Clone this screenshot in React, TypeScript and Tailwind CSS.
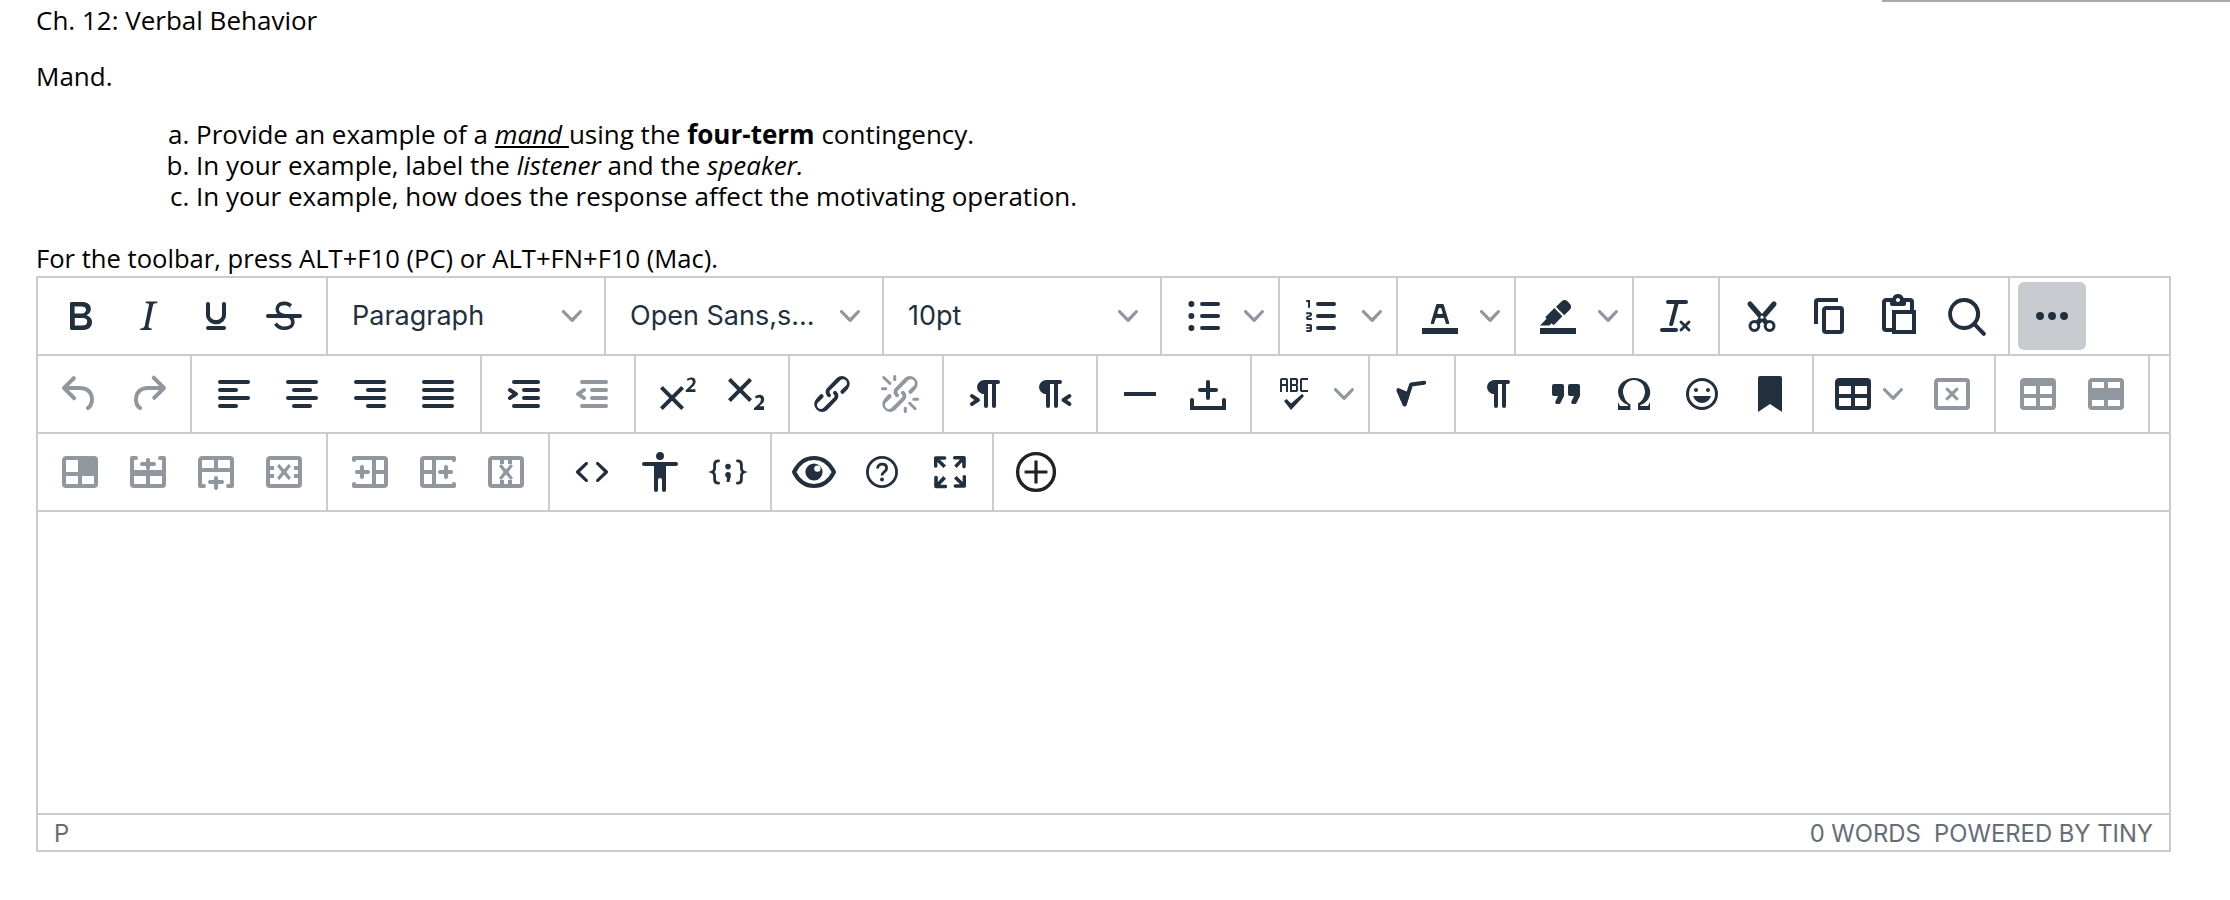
import type { ReactNode } from 'react'

// paths of the editor toolbar icons, all on a 24 unit grid
const BOX = 'M19 4a2 2 0 012 2v12a2 2 0 01-2 2H5a2 2 0 01-2-2V6c0-1.1.9-2 2-2h14z'
const X_MARK = 'M14.300 8l1.200 1-2.300 3 2.300 3-1.200 1-2.300-2.800L9.700 16l-1.200-1 2.300-3-2.300-3 1.200-1 2.300 2.800z'
const ROW_ABOVE =
  'M6 4a1 1 0 110 2H5v5h14V6h-1a1 1 0 010-2h2c.6 0 1 .4 1 1v13a2 2 0 01-2 2H5a2 2 0 01-2-2V5c0-.6.4-1 1-1h2zm5 10H5v4h6v-4zm8 0h-6v4h6v-4zM12 5c.5 0 1 .4 1 .8V7h2a1 1 0 010 2h-2v1.200c0 .4-.4.8-1 .8s-1-.4-1-.8V9H9a1 1 0 010-2h2V5.800c0-.4.5-.8 1-.8z'
const ROW_AFTER =
  'M12 14c.5 0 1 .4 1 1v1h2c.6 0 1 .4 1 1s-.4 1-1 1h-2v2c0 .6-.4 1-1 1a1 1 0 01-1-1v-2H9a1 1 0 010-2h2v-1c0-.6.4-1 1-1zm6 6a1 1 0 010-2h1v-6H5v6h1a1 1 0 010 2H4a1 1 0 01-1-1V6c0-1.1.9-2 2-2h14a2 2 0 012 2v13c0 .5-.4 1-1 1h-2zM11 6H5v4h6V6zm8 0h-6v4h6V6z'
const COL_BEFORE =
  'M4 4h15a2 2 0 012 2v12a2 2 0 01-2 2H4a1 1 0 01-1-1v-1a1 1 0 012 0h8V6H5a1 1 0 01-2 0V5c0-.6.4-1 1-1zM15 6h4v5h-4zM15 13h4v5h-4zM8 8.500c.5 0 1 .4 1 1V11h2a1 1 0 010 2H9v1.500a1 1 0 01-2 0V13H5.500a1 1 0 010-2H7V9.500c0-.6.5-1 1-1z'
const LINK =
  'M6.2 12.3a1 1 0 011.4 1.4l-2 2a2 2 0 102.6 2.8l4.8-4.8a1 1 0 000-1.4 1 1 0 111.4-1.3 2.9 2.9 0 010 4L9.6 20a3.9 3.9 0 01-5.5-5.5l2-2.2zm11.6-.6a1 1 0 01-1.4-1.4l2.1-2a2 2 0 10-2.7-2.8L11 10.3a1 1 0 000 1.4A1 1 0 119.6 13a2.9 2.9 0 010-4L14.4 4a3.9 3.9 0 015.5 5.5l-2.1 2.2z'

const paths: Record<string, ReactNode> = {
  bold: <path d="M7.8 19c-.3 0-.5 0-.6-.2l-.2-.5V5.7c0-.2 0-.4.2-.5l.6-.2h5c1.5 0 2.7.3 3.5 1 .7.6 1.1 1.4 1.1 2.5a3 3 0 01-.6 1.9c-.4.6-1 1-1.6 1.2.4.1.9.3 1.3.6s.8.7 1 1.2c.4.4.5 1 .5 1.6 0 1.3-.4 2.3-1.3 3-.8.7-2.1 1-3.8 1H7.8zm5-8.3c.6 0 1.2-.1 1.6-.5.4-.3.6-.7.6-1.3 0-1.1-.8-1.7-2.3-1.7H9.3v3.5h3.4zm.5 6c.7 0 1.3-.1 1.7-.4.4-.4.6-.9.6-1.5s-.2-1-.7-1.4c-.4-.3-1-.4-2-.4H9.4v3.8h4z" fillRule="evenodd" />,
  italic: <path d="M16.7 4.7l-.1.9h-.3c-.6 0-1 0-1.4.3-.3.3-.4.6-.5 1.1l-2.1 9.8v.6c0 .5.4.8 1.4.8h.2l-.2.8H8l.2-.8h.2c1.1 0 1.8-.5 2-1.5l2-9.8.1-.5c0-.6-.4-.8-1.4-.8h-.3l.2-.9h5.8z" fillRule="evenodd" />,
  underline: <path d="M16 5c.6 0 1 .4 1 1v5.5a4 4 0 01-.4 1.8l-1 1.4a5.3 5.3 0 01-5.5 1 5 5 0 01-1.6-1c-.5-.4-.8-.9-1.1-1.4a4 4 0 01-.4-1.8V6c0-.6.4-1 1-1s1 .4 1 1v5.5c0 .3 0 .6.2 1l.6.7a3.3 3.3 0 002.2.8 3.4 3.4 0 002.2-.8c.3-.2.4-.5.6-.8l.2-.9V6c0-.6.4-1 1-1zM8 17h8c.6 0 1 .4 1 1s-.4 1-1 1H8a1 1 0 010-2z" fillRule="evenodd" />,
  strike: (
    <>
      <path d="M15.6 8.5c-.5-.7-1-1.1-1.3-1.3-.6-.4-1.3-.6-2-.6-2.7 0-2.8 1.7-2.8 2.1 0 1.6 1.8 2 3.2 2.3 4.4.9 4.6 2.8 4.6 3.9 0 1.4-.7 4.1-5 4.1A6.2 6.2 0 017 16.4l1.5-1.1c.4.6 1.6 2 3.7 2 1.6 0 2.5-.4 3-1 .3-.4.3-.9.3-1.3 0-1.6-1.3-2.1-3.6-2.7-1.4-.3-4.1-1-4.1-3.6 0-1.5.6-4 4.4-4 1.9 0 3 .7 3.8 1.5l-1 1.3z" />
      <rect width="18" height="2" x="3" y="11" rx="1" />
    </>
  ),
  undo: <path d="M6.4 8H12c3.7 0 6.2 2 6.8 5.1.6 2.7-.4 5.6-2.3 6.8a1 1 0 01-1-1.8c1.1-.6 1.8-2.7 1.4-4.6-.5-2.1-2.1-3.5-4.9-3.5H6.4l3.3 3.3a1 1 0 11-1.4 1.4l-5-5a1 1 0 010-1.4l5-5a1 1 0 011.4 1.4L6.4 8z" />,
  redo: <path d="M17.6 10H12c-2.8 0-4.4 1.4-4.9 3.5-.4 2 .3 4 1.4 4.6a1 1 0 11-1 1.8c-2-1.2-2.9-4.1-2.3-6.8.6-3 3-5.1 6.8-5.1h5.6l-3.3-3.3a1 1 0 111.4-1.4l5 5a1 1 0 010 1.4l-5 5a1 1 0 01-1.4-1.4l3.3-3.3z" />,
  alignLeft: <path d="M5 5h14c.6 0 1 .4 1 1s-.4 1-1 1H5a1 1 0 110-2zm0 4h8c.6 0 1 .4 1 1s-.4 1-1 1H5a1 1 0 110-2zm0 8h8c.6 0 1 .4 1 1s-.4 1-1 1H5a1 1 0 010-2zm0-4h14c.6 0 1 .4 1 1s-.4 1-1 1H5a1 1 0 010-2z" />,
  alignCenter: <path d="M5 5h14c.6 0 1 .4 1 1s-.4 1-1 1H5a1 1 0 110-2zm3 4h8c.6 0 1 .4 1 1s-.4 1-1 1H8a1 1 0 110-2zm0 8h8c.6 0 1 .4 1 1s-.4 1-1 1H8a1 1 0 010-2zm-3-4h14c.6 0 1 .4 1 1s-.4 1-1 1H5a1 1 0 010-2z" />,
  alignRight: <path d="M5 5h14c.6 0 1 .4 1 1s-.4 1-1 1H5a1 1 0 110-2zm6 4h8c.6 0 1 .4 1 1s-.4 1-1 1h-8a1 1 0 010-2zm0 8h8c.6 0 1 .4 1 1s-.4 1-1 1h-8a1 1 0 010-2zm-6-4h14c.6 0 1 .4 1 1s-.4 1-1 1H5a1 1 0 010-2z" />,
  justify: <path d="M5 5h14c.6 0 1 .4 1 1s-.4 1-1 1H5a1 1 0 110-2zm0 4h14c.6 0 1 .4 1 1s-.4 1-1 1H5a1 1 0 110-2zm0 4h14c.6 0 1 .4 1 1s-.4 1-1 1H5a1 1 0 010-2zm0 4h14c.6 0 1 .4 1 1s-.4 1-1 1H5a1 1 0 010-2z" />,
  indent: <path d="M7 5h12c.6 0 1 .4 1 1s-.4 1-1 1H7a1 1 0 110-2zm5 4h7c.6 0 1 .4 1 1s-.4 1-1 1h-7a1 1 0 010-2zm0 4h7c.6 0 1 .4 1 1s-.4 1-1 1h-7a1 1 0 010-2zm-5 4h12a1 1 0 010 2H7a1 1 0 010-2zm-2.6-3.8L6.2 12l-1.8-1.2a1 1 0 011.2-1.6l3 2a1 1 0 010 1.6l-3 2a1 1 0 11-1.2-1.6z" />,
  outdent: <path d="M7 5h12c.6 0 1 .4 1 1s-.4 1-1 1H7a1 1 0 110-2zm5 4h7c.6 0 1 .4 1 1s-.4 1-1 1h-7a1 1 0 010-2zm0 4h7c.6 0 1 .4 1 1s-.4 1-1 1h-7a1 1 0 010-2zm-5 4h12a1 1 0 010 2H7a1 1 0 010-2zm1.6-3.8a1 1 0 01-1.2 1.6l-3-2a1 1 0 010-1.6l3-2a1 1 0 011.2 1.6L6.8 12l1.8 1.2z" />,
  sup: <path d="M15 9.4L10.4 14l4.6 4.6-1.4 1.4L9 15.4 4.4 20 3 18.6 7.6 14 3 9.4 4.4 8 9 12.6 13.6 8 15 9.4zm5.9 1.6h-5v-1l1-.9 1.7-1.6c.3-.3.5-.6.6-.9.2-.3.2-.5.2-.8 0-.3-.1-.6-.3-.7-.2-.2-.4-.3-.8-.3-.3 0-.5.1-.8.2l-.7.4-.4-.9c.3-.2.6-.4 1-.5.4-.1.7-.2 1.1-.2.7 0 1.3.2 1.7.5.4.4.6.9.6 1.5 0 .4-.1.8-.3 1.2-.2.4-.6.8-1.1 1.4l-1.3 1.1v.1h2.6v1z" fillRule="evenodd" />,
  sub: <path d="M10.4 10l4.6 4.6-1.4 1.4L9 11.4 4.4 16 3 14.6 7.6 10 3 5.4 4.4 4 9 8.6 13.6 4 15 5.4 10.4 10zM21 20h-5v-1l1-.8 1.7-1.6c.3-.4.5-.7.6-1l.2-.8c0-.3-.1-.5-.3-.7-.2-.2-.5-.3-.8-.3a2 2 0 00-.8.2l-.7.3-.4-1.1 1-.6 1.2-.2c.8 0 1.4.3 1.8.7.4.4.6.9.6 1.5s-.2 1.1-.5 1.6a8 8 0 01-1.3 1.3l-.6.6H21V20z" fillRule="evenodd" />,
  link: <path d={LINK} />,
  unlink: <path d={LINK + 'M7.6 6.3a.8.8 0 01-1 1.1L3.3 4.2a.7.7 0 111-1l3.3 3.1zM5.1 8.6a.8.8 0 010 1.5H3a.8.8 0 010-1.5h2.1zm5-3.5a.8.8 0 01-1.5 0V3a.8.8 0 011.5 0v2.1zm6 11.8a.8.8 0 011-1l3.2 3.2a.8.8 0 01-1 1L16.100 16.900zm-2.200 2a.8.8 0 011.5 0V21a.8.8 0 01-1.5 0v-2.100zm5-3.500a.7.7 0 110-1.500H21a.8.8 0 010 1.500h-2.100z'} />,
  ltr: <path d="M11 5h7a1 1 0 010 2h-1v11a1 1 0 01-2 0V7h-2v11a1 1 0 01-2 0v-6c-.5 0-1 0-1.400-.3A3.400 3.400 0 017.800 10a3.300 3.300 0 010-2.800 3.400 3.400 0 011.800-1.800L11 5zM4.400 16.200L6.200 15l-1.800-1.200a1 1 0 011.200-1.600l3 2a1 1 0 010 1.600l-3 2a1 1 0 11-1.200-1.600z" />,
  rtl: <path d="M8 5h7a1 1 0 010 2h-1v11a1 1 0 01-2 0V7h-2v11a1 1 0 01-2 0v-6c-.5 0-1 0-1.400-.3A3.400 3.400 0 014.800 10a3.300 3.300 0 010-2.800 3.400 3.400 0 011.800-1.800L8 5zm12.300 8.800L18.500 15l1.800 1.200a1 1 0 01-1.200 1.600l-3-2a1 1 0 010-1.600l3-2a1 1 0 011.200 1.600z" />,
  hr: <path d="M4 11h16v2H4z" />,
  nbsp: <path d="M11 11H8a1 1 0 110-2h3V6c0-.6.4-1 1-1s1 .4 1 1v3h3c.6 0 1 .4 1 1s-.4 1-1 1h-3v3c0 .6-.4 1-1 1a1 1 0 01-1-1v-3zm10 4v5H3v-5c0-.6.4-1 1-1s1 .4 1 1v3h14v-3c0-.6.4-1 1-1s1 .4 1 1z" />,
  spell: <path d="M6 8v3H5V5c0-.3.1-.5.3-.7.2-.2.4-.3.7-.3h2c.3 0 .5.1.7.3.2.2.3.4.3.7v6H8V8H6zm0-3v2h2V5H6zm13 0h-3v5h3v1h-3a1 1 0 01-.7-.3 1 1 0 01-.3-.7V5c0-.3.1-.5.3-.7.2-.2.4-.3.7-.3h3v1zm-5 1.500l-.1.7c-.1.2-.3.3-.6.3.3 0 .5.1.6.3l.1.7V10c0 .3-.1.5-.3.7a1 1 0 01-.7.3h-3V4h3c.3 0 .5.1.7.3.2.2.3.4.3.7v1.500zM13 10V8h-2v2h2zm0-3V5h-2v2h2zm3 5l1 1-6.500 7L7 15.500l1.300-1 2.200 2.200L16 12z" fillRule="evenodd" />,
  root: (
    <>
      <path d="M5.300 10.200l3 6.900 1.400-5z" stroke="currentColor" strokeWidth="2.200" strokeLinejoin="round" />
      <path d="M8.300 17.100l3.300-9.900 6.500-.8" fill="none" stroke="currentColor" strokeWidth="2" strokeLinecap="round" strokeLinejoin="round" />
    </>
  ),
  pilcrow: <path d="M10 5h7a1 1 0 010 2h-1v11a1 1 0 01-2 0V7h-2v11a1 1 0 01-2 0v-6c-.5 0-1 0-1.400-.3A3.400 3.400 0 016.800 10a3.300 3.300 0 010-2.800 3.400 3.400 0 011.800-1.800L10 5z" />,
  quote: <path d="M7.500 17h.9c.4 0 .7-.2.9-.6L11 13V8c0-.6-.4-1-1-1H6a1 1 0 00-1 1v4c0 .6.4 1 1 1h2l-1.300 2.700a1 1 0 00.8 1.300zm8 0h.9c.4 0 .7-.2.9-.6L19 13V8c0-.6-.4-1-1-1h-4a1 1 0 00-1 1v4c0 .6.4 1 1 1h2l-1.300 2.700a1 1 0 00.8 1.300z" />,
  omega: <path d="M15 18h4l1-2v4h-6v-3.300l1.400-1a6 6 0 001.800-2.900 6.300 6.300 0 00-.1-4.100 5.800 5.800 0 00-3-3.200c-.6-.3-1.300-.5-2.100-.5a5.100 5.100 0 00-3.900 1.800 6.300 6.300 0 00-1.100 6.500 5.800 5.800 0 001.800 3l1.400 1V20H4v-4l1 2h4v-.5l-2-1L5.400 15A6.500 6.500 0 014 11c0-1 .2-1.900.6-2.700A7 7 0 016.300 6C7.100 5.400 8 5 9 4.500c1-.3 2-.5 3-.5 1.100 0 2.200.2 3.200.5 1 .4 1.900 1 2.700 1.600a7 7 0 011.600 2.400c.4.8.6 1.700.6 2.600 0 1.500-.5 2.800-1.400 4l-1.600 1.500-2 1v.4z" />,
  emoji: <path d="M9 11c.6 0 1-.4 1-1s-.4-1-1-1a1 1 0 00-1 1c0 .6.4 1 1 1zm6 0c.6 0 1-.4 1-1s-.4-1-1-1a1 1 0 00-1 1c0 .6.4 1 1 1zm-3 5.500c2.100 0 4-1.500 4.400-3.500H7.600c.5 2 2.300 3.500 4.400 3.500zM12 4a8 8 0 100 16 8 8 0 000-16zm0 14.500a6.500 6.500 0 110-13 6.500 6.500 0 010 13z" fillRule="evenodd" />,
  bookmark: <path d="M6 4v17l6-4 6 4V4c0-.6-.4-1-1-1H7a1 1 0 00-1 1z" />,
  table: <path d={BOX + 'M19 14h-6v4h6v-4zm-8 0H5v4h6v-4zm8-6h-6v4h6V8zm-8 0H5v4h6V8z'} fillRule="evenodd" />,
  tableDelete: (
    <>
      <path d={BOX + 'M5 6v12h14V6H5z'} fillRule="evenodd" />
      <path d="M14.400 8.600l1 1-2.300 2.400 2.300 2.400-1 1-2.400-2.300-2.400 2.300-1-1 2.300-2.400-2.300-2.400 1-1 2.400 2.300z" />
    </>
  ),
  tableRow: <path d={BOX + 'M19 15h-6v3h6v-3zm-8 0H5v3h6v-3zm8-9h-6v3h6V6zm-8 0H5v3h6V6z'} fillRule="evenodd" />,
  tableCell: <path d={BOX + 'M11 14H5v4h6v-4zm8 0h-6v4h6v-4zM11 6H5v6h6V6z'} fillRule="evenodd" />,
  rowAbove: <path d={ROW_ABOVE} fillRule="evenodd" />,
  rowAfter: <path d={ROW_AFTER} fillRule="evenodd" />,
  rowDelete: <path d={BOX + 'M5 6h14v3h-2v2h2v2h-2v2h2v3H5v-3h2v-2H5v-2h2V9H5z' + X_MARK} fillRule="evenodd" />,
  colBefore: <path d={COL_BEFORE} fillRule="evenodd" />,
  colAfter: <path d={COL_BEFORE} fillRule="evenodd" transform="translate(24 0) scale(-1 1)" />,
  colDelete: <path d={BOX + 'M5 6h4v2h2V6h2v2h2V6h4v12h-4v-2h-2v2h-2v-2H9v2H5z' + X_MARK} fillRule="evenodd" />,
  source: <path d="M9.800 15.700c.3.3.3.8 0 1-.3.4-.9.4-1.200 0l-4.400-4.100a.8.8 0 010-1.200l4.400-4.200c.3-.3.9-.3 1.200 0 .3.3.3.8 0 1.100L6 12l3.800 3.700zM14.200 15.700c-.3.3-.3.8 0 1 .4.4.9.4 1.200 0l4.400-4.100c.3-.3.3-.9 0-1.200l-4.400-4.200a.8.8 0 00-1.200 0c-.3.3-.3.8 0 1.100L18 12l-3.800 3.700z" />,
  a11y: <path d="M12 2a2 2 0 012 2 2 2 0 01-2 2 2 2 0 01-2-2c0-1.100.9-2 2-2zm8 7h-5v12c0 .6-.4 1-1 1a1 1 0 01-1-1v-5c0-.6-.4-1-1-1a1 1 0 00-1 1v5c0 .6-.4 1-1 1a1 1 0 01-1-1V9H4a1 1 0 110-2h16c.6 0 1 .4 1 1s-.4 1-1 1z" />,
  code: (
    <>
      <path d="M7.300 6.400c-1.500 0-2 .6-2 1.700v1.900c0 1.100-.4 1.700-1.200 2 .8.300 1.200.9 1.200 2v1.900c0 1.100.5 1.700 2 1.700M16.700 6.400c1.500 0 2 .6 2 1.700v1.900c0 1.100.4 1.700 1.200 2-.8.300-1.200.9-1.200 2v1.900c0 1.100-.5 1.700-2 1.700" fill="none" stroke="currentColor" strokeWidth="1.400" strokeLinecap="round" />
      <circle cx="12" cy="9.300" r="1.400" />
      <circle cx="12" cy="13.400" r="1.400" />
      <path d="M11.600 14h1.800l-.7 3h-1.400z" />
    </>
  ),
  eye: (
    <>
      <path d="M2 12c2.400-4.800 6-7 10-7s7.600 2.200 10 7c-2.400 4.800-6 7-10 7s-7.600-2.200-10-7z" fill="none" stroke="currentColor" strokeWidth="2" strokeLinejoin="round" />
      <circle cx="12" cy="12" r="4.300" />
      <circle cx="13.700" cy="10.300" r="1.600" fill="#fff" />
    </>
  ),
  help: (
    <>
      <circle cx="12" cy="12" r="7.300" fill="none" stroke="currentColor" strokeWidth="1.400" />
      <path d="M9.800 10.200c0-1.300 1-2.100 2.300-2.100s2.200.8 2.200 2c0 1.900-2.300 1.800-2.300 3.600" fill="none" stroke="currentColor" strokeWidth="1.400" />
      <circle cx="12" cy="15.800" r="1" />
    </>
  ),
  fullscreen: <path d="M15.300 10l-1.200-1.300 2.900-3h-2.300a.9.9 0 110-1.700H19c.5 0 .9.4.9.9v4.400a.9.9 0 11-1.800 0V7l-2.800 3zm0 4l3 3v-2.300a.9.9 0 111.700 0V19c0 .5-.4.9-.9.9h-4.400a.9.9 0 110-1.800H17l-3-2.800 1.300-1.300zM10 15.400l-2.900 3h2.300a.9.9 0 110 1.700H5a.9.9 0 01-.9-.9v-4.400a.9.9 0 111.800 0V17l2.800-3 1.300 1.400zM8.700 10L5.700 7v2.300a.9.9 0 01-1.700 0V5c0-.5.4-.9.9-.9h4.400a.9.9 0 010 1.800H7l3 2.800L8.700 10z" />,
  addCircle: (
    <>
      <circle cx="12" cy="12" r="9.200" fill="none" stroke="#222222" strokeWidth="1.700" />
      <path d="M12 6.300v11.400M6.300 12h11.400" stroke="#222222" strokeWidth="1.600" />
    </>
  ),
  bullets: (
    <>
      <circle cx="5.700" cy="6" r="1.500" />
      <circle cx="5.700" cy="12" r="1.500" />
      <circle cx="5.700" cy="18" r="1.500" />
      <path d="M11 5h8c.6 0 1 .4 1 1s-.4 1-1 1h-8a1 1 0 010-2zm0 6h8c.6 0 1 .4 1 1s-.4 1-1 1h-8a1 1 0 010-2zm0 6h8c.6 0 1 .4 1 1s-.4 1-1 1h-8a1 1 0 010-2z" />
    </>
  ),
  numbers: <path d="M10 17h8c.6 0 1 .4 1 1s-.4 1-1 1h-8a1 1 0 010-2zm0-6h8c.6 0 1 .4 1 1s-.4 1-1 1h-8a1 1 0 010-2zm0-6h8c.6 0 1 .4 1 1s-.4 1-1 1h-8a1 1 0 110-2zM6 4v3.500c0 .3-.2.5-.5.5a.5.5 0 01-.5-.5V5h-.5a.5.5 0 010-1H6zm-1 8.800l.2.2h1.300c.3 0 .5.2.5.5s-.2.5-.5.5H4.900a1 1 0 01-.9-1V13c0-.4.3-.8.6-1l1.200-.4.2-.3a.2.2 0 00-.2-.2H4.500a.5.5 0 01-.5-.5c0-.3.2-.5.5-.5h1.600c.5 0 .9.4.9 1v.1c0 .4-.3.8-.6 1l-1.200.4-.2.2zM7 17v2c0 .6-.4 1-1 1H4.500a.5.5 0 010-1h1.200c.2 0 .3-.1.3-.3 0-.2-.1-.3-.3-.3H4.400a.4.4 0 110-.8h1.300c.2 0 .3-.1.3-.3 0-.2-.1-.3-.3-.3H4.500a.5.5 0 110-1H6c.6 0 1 .4 1 1z" />,
  textColor: (
    <>
      <path d="M3 18h18v3H3z" />
      <path d="M8.700 16h-.8a.5.5 0 01-.5-.6l2.700-9c.1-.3.3-.4.5-.4h2.800c.2 0 .4.1.5.4l2.700 9a.5.5 0 01-.5.6h-.8a.5.5 0 01-.4-.4l-.7-2.200c0-.3-.3-.4-.5-.4h-3.400c-.2 0-.4.1-.5.4l-.7 2.200c0 .3-.2.4-.4.4zm2.600-7.600l-.6 2a.5.5 0 00.5.6h1.600a.5.5 0 00.5-.6l-.6-2c0-.3-.3-.4-.5-.4h-.4c-.2 0-.4.1-.5.4z" fillRule="evenodd" />
    </>
  ),
  highlight: (
    <>
      <path d="M3 18h18v3H3z" />
      <path d="M7.700 16.700H3l3.300-3.300-.7-.8L10.200 8l4 4.100-4 4.200c-.2.2-.6.2-.8 0l-.6-.7-1.100 1.100zm5-7.500L11 7.400l3-2.900a2 2 0 012.600 0L18 6c.7.7.7 2 0 2.700l-2.900 2.900-1.800-1.800-.6-.6z" />
    </>
  ),
  clear: <path d="M13.200 6a1 1 0 010 .2l-2.600 10a1 1 0 01-1 .8h-.2a.8.8 0 01-.8-1l2.600-10H8a1 1 0 110-2h9a1 1 0 010 2h-3.800zM5 18h7a1 1 0 010 2H5a1 1 0 010-2zm13 1.500L16.500 18 15 19.500a.7.7 0 01-1-1l1.500-1.500-1.500-1.500a.7.7 0 011-1l1.500 1.500 1.500-1.500a.7.7 0 011 1L17.500 17l1.500 1.500a.7.7 0 01-1 1z" />,
  cut: (
    <>
      <path d="M6 6l7.800 9M18 6l-7.800 9" fill="none" stroke="currentColor" strokeWidth="2.500" strokeLinecap="round" />
      <circle cx="8.200" cy="17" r="2.200" fill="#fff" stroke="currentColor" strokeWidth="1.500" />
      <circle cx="15.800" cy="17" r="2.200" fill="#fff" stroke="currentColor" strokeWidth="1.500" />
      <circle cx="12" cy="12.600" r=".8" fill="#fff" />
    </>
  ),
  copy: <path d="M16 3H6a2 2 0 00-2 2v11h2V5h10V3zm1 4a2 2 0 012 2v10a2 2 0 01-2 2h-7a2 2 0 01-2-2V9c0-1.100.9-2 2-2h7zm0 12V9h-7v10h7z" fillRule="evenodd" />,
  paste: <path d="M18 9V5h-2v1c0 .6-.4 1-1 1H9a1 1 0 01-1-1V5H6v13h3V9h9zM9 20H6a2 2 0 01-2-2V5c0-1.100.9-2 2-2h3.200A3 3 0 0112 1a3 3 0 012.800 2H18a2 2 0 012 2v4h1v12H9v-1zm2-9v8h8v-8h-8zM12 3a1 1 0 00-1 1c0 .5.4 1 1 1s1-.5 1-1-.4-1-1-1z" fillRule="evenodd" />,
  search: <path d="M16 17.300a8 8 0 111.400-1.400l4.300 4.400a1 1 0 01-1.400 1.400l-4.300-4.400zm-5-.3a6 6 0 100-12 6 6 0 000 12z" fillRule="evenodd" />,
  more: <path d="M6 10a2 2 0 00-2 2c0 1.100.9 2 2 2a2 2 0 002-2 2 2 0 00-2-2zm12 0a2 2 0 00-2 2c0 1.100.9 2 2 2a2 2 0 002-2 2 2 0 00-2-2zm-6 0a2 2 0 00-2 2c0 1.100.9 2 2 2a2 2 0 002-2 2 2 0 00-2-2z" />,
}

function Icon({ name, off }: { name: string; off?: boolean }) {
  return (
    <svg
      width="48"
      height="48"
      viewBox="0 0 24 24"
      fill="currentColor"
      className={off ? 'text-[#90979f]' : 'text-[#222f3e]'}
    >
      {paths[name]}
    </svg>
  )
}

function Chevron() {
  return (
    <svg width="20" height="20" viewBox="0 0 10 10" fill="#90979f">
      <path d="M8.700 2.200c.3-.3.8-.3 1 0 .4.400.4.900 0 1.200L5.700 7.800c-.3.300-.9.300-1.200 0L.2 3.400a.8.8 0 010-1.200c.3-.3.8-.3 1.100 0L5 6l3.700-3.800z" />
    </svg>
  )
}

function Btn({ name, off, active }: { name: string; off?: boolean; active?: boolean }) {
  return (
    <div
      className={`flex h-[68px] w-[68px] items-center justify-center rounded-[6px] ${active ? 'bg-[#c8cbcf]' : ''}`}
    >
      <Icon name={name} off={off} />
    </div>
  )
}

function Split({ name }: { name: string }) {
  return (
    <div className="flex h-[68px] w-[100px]">
      <div className="flex w-[68px] items-center justify-center">
        <Icon name={name} />
      </div>
      <div className="flex w-[32px] items-center justify-center">
        <Chevron />
      </div>
    </div>
  )
}

function Select({ label }: { label: string }) {
  return (
    <div className="flex h-[68px] w-[260px] items-center justify-between pl-4 pr-[14px] text-[27px] text-[#222f3e]">
      <span>{label}</span>
      <Chevron />
    </div>
  )
}

function Group({ children, last }: { children?: ReactNode; last?: boolean }) {
  return (
    <div className={`flex py-1 ${last ? 'px-2' : 'border-r-2 border-[#cccccc] px-2'}`}>{children}</div>
  )
}

function Row({ children }: { children: ReactNode }) {
  return <div className="flex h-[78px] border-b-2 border-[#cccccc]">{children}</div>
}

export default function App() {
  return (
    <div className="min-h-[900px] bg-white font-['Open_Sans',sans-serif] text-[26px] leading-[31px] text-black">
      <div className="ml-auto h-[2px] w-[348px] bg-[#aaaaaa]" />
      <div className="pl-[36px] pt-[3px]">
        <p>Ch. 12: Verbal Behavior</p>
        <p className="mt-[25px]">Mand.</p>
        <ol className="mt-[27px] list-[lower-alpha] pl-[160px]">
          <li>
            Provide an example of a{' '}
            <em>
              <u>mand </u>
            </em>
            using the <strong>four-term</strong> contingency.
          </li>
          <li>
            In your example, label the <em>listener</em> and the <em>speaker.</em>
          </li>
          <li>In your example, how does the response affect the motivating operation.</li>
        </ol>
        <p className="mt-[31px] text-[25.6px]">For the toolbar, press ALT+F10 (PC) or ALT+FN+F10 (Mac).</p>

        <div className="mt-[2px] flex h-[576px] w-[2135px] flex-col border-2 border-[#cccccc] font-['Inter',sans-serif] leading-normal">
          <Row>
            <Group>
              <Btn name="bold" />
              <Btn name="italic" />
              <Btn name="underline" />
              <Btn name="strike" />
            </Group>
            <Group>
              <Select label="Paragraph" />
            </Group>
            <Group>
              <Select label="Open Sans,s..." />
            </Group>
            <Group>
              <Select label="10pt" />
            </Group>
            <Group>
              <Split name="bullets" />
            </Group>
            <Group>
              <Split name="numbers" />
            </Group>
            <Group>
              <Split name="textColor" />
            </Group>
            <Group>
              <Split name="highlight" />
            </Group>
            <Group>
              <Btn name="clear" />
            </Group>
            <Group>
              <Btn name="cut" />
              <Btn name="copy" />
              <Btn name="paste" />
              <Btn name="search" />
            </Group>
            <Group last>
              <Btn name="more" active />
            </Group>
          </Row>
          <Row>
            <Group>
              <Btn name="undo" off />
              <Btn name="redo" off />
            </Group>
            <Group>
              <Btn name="alignLeft" />
              <Btn name="alignCenter" />
              <Btn name="alignRight" />
              <Btn name="justify" />
            </Group>
            <Group>
              <Btn name="indent" />
              <Btn name="outdent" off />
            </Group>
            <Group>
              <Btn name="sup" />
              <Btn name="sub" />
            </Group>
            <Group>
              <Btn name="link" />
              <Btn name="unlink" off />
            </Group>
            <Group>
              <Btn name="ltr" />
              <Btn name="rtl" />
            </Group>
            <Group>
              <Btn name="hr" />
              <Btn name="nbsp" />
            </Group>
            <Group>
              <Split name="spell" />
            </Group>
            <Group>
              <Btn name="root" />
            </Group>
            <Group>
              <Btn name="pilcrow" />
              <Btn name="quote" />
              <Btn name="omega" />
              <Btn name="emoji" />
              <Btn name="bookmark" />
            </Group>
            <Group>
              <div className="flex h-[68px] w-[96px] items-center pl-[7px]">
                <Icon name="table" />
                <div className="ml-[6px]">
                  <Chevron />
                </div>
              </div>
              <Btn name="tableDelete" off />
            </Group>
            <Group>
              <Btn name="table" off />
              <Btn name="tableRow" off />
            </Group>
          </Row>
          <Row>
            <Group>
              <Btn name="tableCell" off />
              <Btn name="rowAbove" off />
              <Btn name="rowAfter" off />
              <Btn name="rowDelete" off />
            </Group>
            <Group>
              <Btn name="colBefore" off />
              <Btn name="colAfter" off />
              <Btn name="colDelete" off />
            </Group>
            <Group>
              <Btn name="source" />
              <Btn name="a11y" />
              <Btn name="code" />
            </Group>
            <Group>
              <Btn name="eye" />
              <Btn name="help" />
              <Btn name="fullscreen" />
            </Group>
            <Group last>
              <Btn name="addCircle" />
            </Group>
          </Row>
          <div className="flex-1" />
          <div className="flex h-[37px] items-center justify-between border-t-2 border-[#cccccc] px-[16px] pt-[2px] text-[23.8px] text-[#646d78]">
            <span>P</span>
            <span>0 WORDS&nbsp; POWERED BY TINY</span>
          </div>
        </div>
      </div>
    </div>
  )
}
